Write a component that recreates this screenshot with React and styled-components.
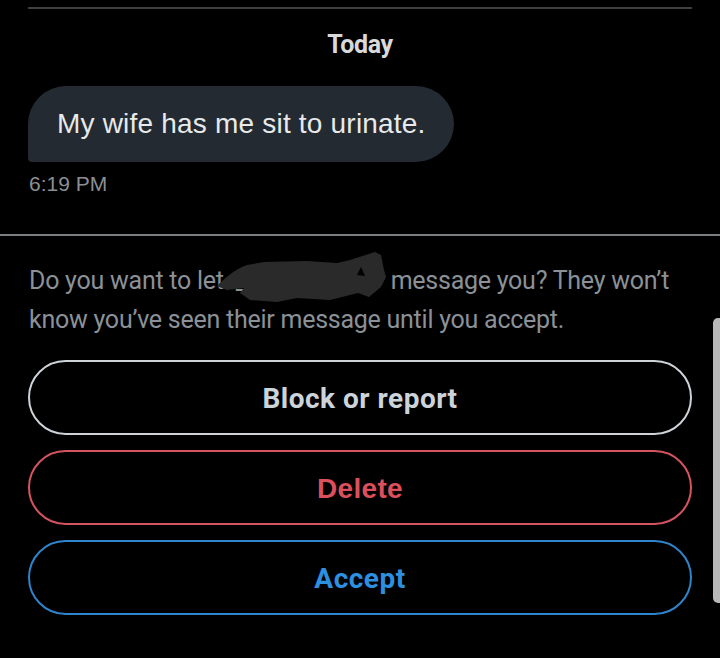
import styled, { createGlobalStyle } from "styled-components"

const GlobalStyle = createGlobalStyle`
    html, body {
        margin: 0;
        padding: 0;
        background: #000000;
    }
    body {
        font-family: Roboto, "Liberation Sans", sans-serif;
    }
`

const Page = styled.main`
    position: relative;
    width: 720px;
    height: 658px;
    background: #000000;
    overflow: hidden;
`
const TopRule = styled.div`
    margin: 7px 28px 0 28px;
    height: 2px;
    background: #3d4043;
`
const DayLabel = styled.p`
    margin: 22px 0 0 0;
    text-align: center;
    color: #d9d9d9;
    font-size: 25px;
    font-weight: 700;
    line-height: 28px;
    letter-spacing: -0.4px;
`
const Thread = styled.section`
    padding: 0 28px;
`
const Bubble = styled.div`
    margin-top: 27px;
    width: fit-content;
    padding: 20px 28px 20px 29px;
    background: #232a31;
    border-radius: 38px 38px 38px 4px;
    color: #e7e9ea;
    font-family: "Liberation Sans", Arial, sans-serif;
    font-size: 28px;
    line-height: 36px;
    letter-spacing: 0.2px;
`
const Stamp = styled.p`
    margin: 10px 0 0 1px;
    color: #8b8f94;
    font-family: "Liberation Sans", Arial, sans-serif;
    font-size: 21px;
    line-height: 24px;
`
const Divider = styled.hr`
    margin: 38px 0 0 0;
    border: none;
    height: 2px;
    background: #7b7e81;
`
const Prompt = styled.p`
    position: relative;
    margin: 25px 20px 0 29px;
    color: #8b9196;
    font-size: 25px;
    line-height: 39px;
    letter-spacing: -0.25px;
`
const Handle = styled.span`
    display: inline-block;
    width: 149px;
    padding-left: 6px;
`
const Scribble = styled.svg`
    position: absolute;
    left: 186px;
    top: -11px;
    width: 176px;
    height: 56px;
`
const Actions = styled.div`
    display: flex;
    flex-direction: column;
    gap: 15px;
    margin: 21px 28px 0 28px;
`
const ActionButton = styled.button`
    height: 75px;
    width: 100%;
    padding: 2px 0 0 0;
    background: #000000;
    border: 2px solid ${p => p.$tone};
    border-radius: 40px;
    color: ${p => p.$ink};
    font-family: ${p => p.$wide ? `"Liberation Sans", Arial, sans-serif` : `Roboto, sans-serif`};
    font-size: 28px;
    font-weight: 700;
    letter-spacing: ${p => p.$wide ? "0.3px" : "0.5px"};
    cursor: pointer;
`
const ScrollThumb = styled.div`
    position: absolute;
    right: 0;
    top: 318px;
    width: 7px;
    height: 285px;
    background: #b8b8b8;
    border-radius: 5px 0 0 5px;
`

const App = () => {
    return (
        <Page>
            <GlobalStyle />
            <TopRule />
            <DayLabel>Today</DayLabel>
            <Thread>
                <Bubble>My wife has me sit to urinate.</Bubble>
                <Stamp>6:19 PM</Stamp>
            </Thread>
            <Divider />
            <Prompt>
                Do you want to let <Handle>_</Handle> message you? They won’t know you’ve seen their message until you accept.
                <Scribble viewBox="0 0 176 56">
                    <path
                        d="M2 36 C 8 30, 18 20, 32 15 L 49 12 L 92 11 L 122 13 L 135 10 L 160 2 L 166 5 L 169 20 L 171 27 L 166 37 L 154 47 L 143 43 L 115 50 L 82 48 L 62 52 L 35 50 L 25 43 L 29 38 L 12 40 Z"
                        fill="#2a2a2a"
                    />
                    <path d="M146 17 L 142 25 L 150 26 Z" fill="#000000" />
                </Scribble>
            </Prompt>
            <Actions>
                <ActionButton $tone="#cdd3d8" $ink="#ccd3d9">Block or report</ActionButton>
                <ActionButton $tone="#d4545f" $ink="#dc4f5c" $wide>Delete</ActionButton>
                <ActionButton $tone="#2f85cb" $ink="#2d8fe0">Accept</ActionButton>
            </Actions>
            <ScrollThumb />
        </Page>
    )
}

export default App
